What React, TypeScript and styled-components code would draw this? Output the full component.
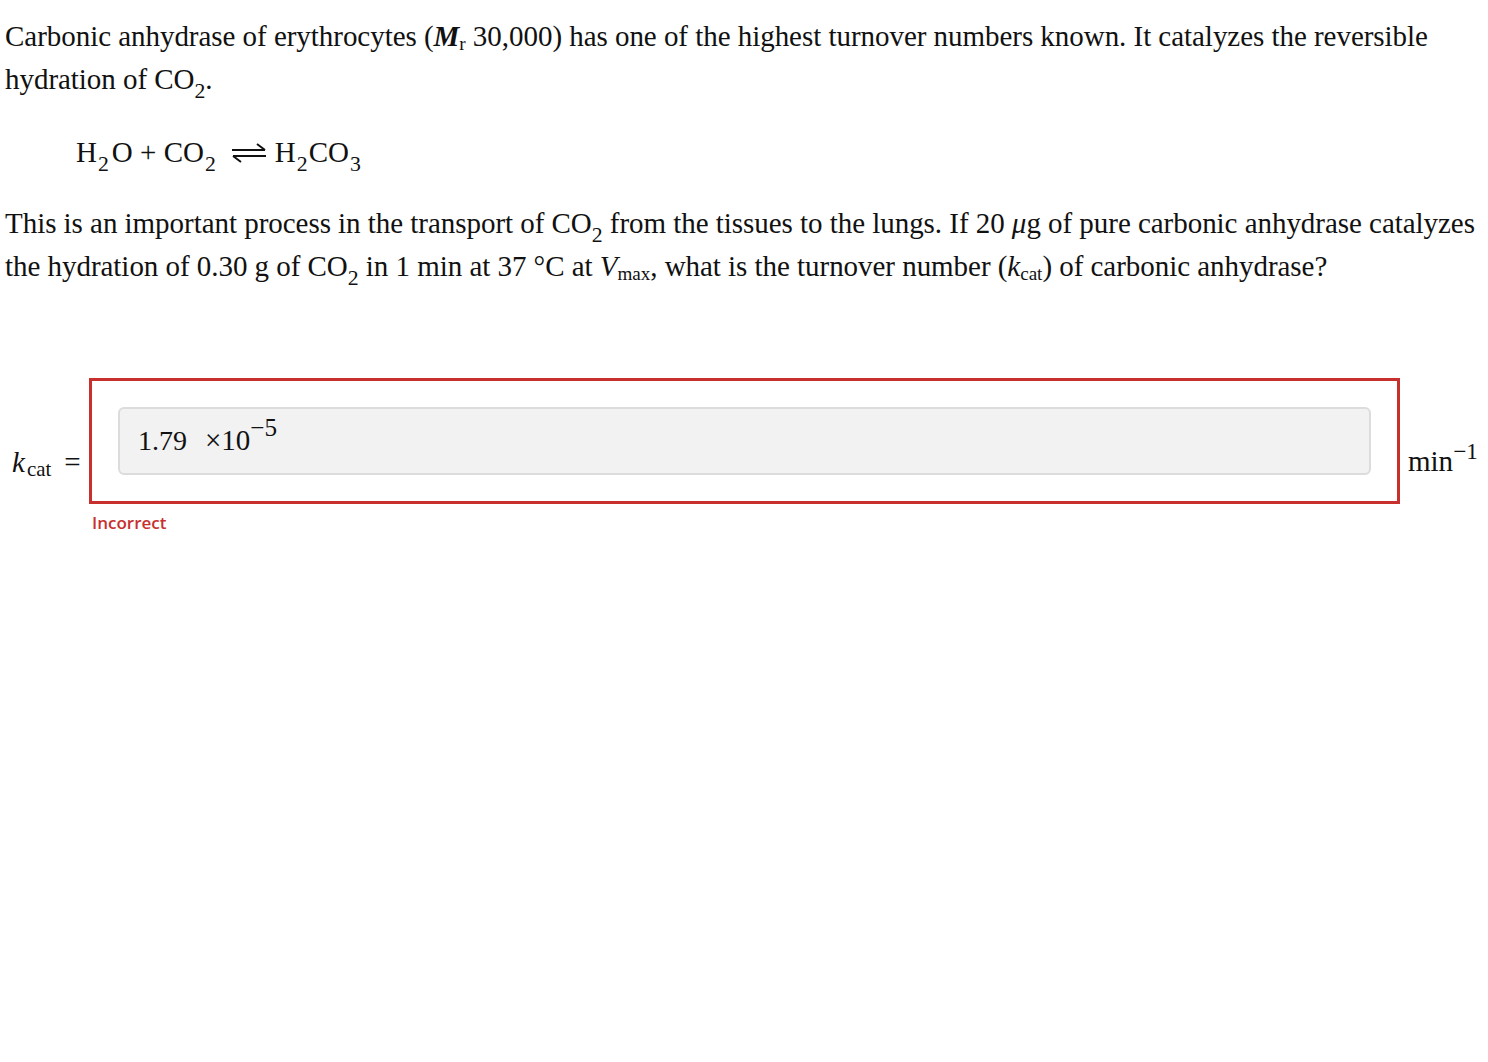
import React from "react";
import styled, { createGlobalStyle } from "styled-components";

const Global = createGlobalStyle`
  html, body { margin: 0; padding: 0; background: #fff; }
  body { font-family: "Liberation Serif", "Times New Roman", serif; color: #111; }
`;

const Page = styled.div`
  padding: 15px 5px 0 5px;
  display: flex;
  flex-direction: column;
`;

const Para = styled.p`
  margin: 0;
  font-size: 29px;
  line-height: 43px;
  letter-spacing: -0.04px;
`;

const Equation = styled.div`
  margin: 30px 0 28px 71px;
  font-size: 29px;
  line-height: 43px;
  display: flex;
  align-items: center;
`;

const Sub = styled.sub<{ $gap?: number }>`
  font-size: 0.75em;
  vertical-align: -0.4em;
  line-height: 0;
  margin-left: ${(p) => (p.$gap ? 1 : 0)}px;
  margin-right: ${(p) => p.$gap ?? 0}px;
`;

const SmallSub = styled.sub<{ $size?: number }>`
  font-size: ${(p) => p.$size ?? 0.66}em;
  vertical-align: -0.22em;
  line-height: 0;
`;

const Sup = styled.sup<{ $raise?: number; $size?: number }>`
  font-size: ${(p) => p.$size ?? 0.8}em;
  vertical-align: ${(p) => p.$raise ?? 0.5}em;
  line-height: 0;
`;

const I = styled.i`
  font-style: italic;
`;

const Arrow = styled.span`
  display: inline-flex;
  margin: 0 8px 0 14px;
`;

const AnswerRow = styled.div`
  margin-top: 90px;
  display: flex;
  align-items: flex-start;
`;

const Label = styled.div`
  width: 84px;
  padding-left: 7px;
  padding-top: 69px;
  font-size: 29px;
  line-height: 30px;
  display: flex;
  align-items: baseline;
  box-sizing: border-box;
`;

const LabelSub = styled.span`
  font-size: 0.72em;
  position: relative;
  top: 0.2em;
  margin-left: 2px;
`;

const Eq = styled.span`
  margin-left: 13px;
`;

const Field = styled.div`
  display: flex;
  flex-direction: column;
`;

const ErrorBox = styled.div`
  width: 1311px;
  height: 126px;
  box-sizing: border-box;
  border: 3px solid #c8302e;
  padding: 26px 26px 0 26px;
`;

const Input = styled.div`
  height: 68px;
  box-sizing: border-box;
  background: #f2f2f2;
  border: 2px solid #dcdcdc;
  border-radius: 6px;
  padding: 16px 0 0 18px;
  font-size: 28px;
  line-height: 30px;
`;

const Times = styled.span`
  margin-left: 11px;
  font-size: 29px;
`;

const Unit = styled.div`
  padding-top: 68px;
  padding-left: 8px;
  font-size: 29px;
  line-height: 30px;
`;

const Feedback = styled.div`
  margin: 8px 0 0 3px;
  font-family: "Open Sans", "Noto Sans", sans-serif;
  font-weight: 600;
  font-size: 17px;
  line-height: 22px;
  color: #c8302e;
`;

export default function App() {
  return (
    <>
      <Global />
      <Page>
        <Para>
          Carbonic anhydrase of erythrocytes (<I><b>M</b></I>
          <SmallSub>r</SmallSub> 30,000) has one of the highest turnover numbers known. It catalyzes the reversible
          hydration of CO<Sub>2</Sub>.
        </Para>
        <Equation>
          <span>
            H<Sub $gap={3}>2</Sub>O + CO<Sub $gap={1}>2</Sub>
          </span>
          <Arrow>
            <svg width="36" height="20" viewBox="0 0 36 20">
              <path d="M1 7 H34 M26 1 L34 7" stroke="#111" strokeWidth="2" fill="none" />
              <path d="M2 13 H35 M2 13 L10 19" stroke="#111" strokeWidth="2" fill="none" />
            </svg>
          </Arrow>
          <span>
            H<Sub $gap={1}>2</Sub>CO<Sub $gap={1}>3</Sub>
          </span>
        </Equation>
        <Para>
          This is an important process in the transport of CO<Sub>2</Sub> from the tissues to the lungs. If 20{" "}
          <I>μ</I>g of pure carbonic anhydrase catalyzes the hydration of 0.30 g of CO<Sub>2</Sub> in 1 min at 37 °C at{" "}
          <I>V</I>
          <SmallSub>max</SmallSub>, what is the turnover number (<I>k</I>
          <SmallSub>cat</SmallSub>) of carbonic anhydrase?
        </Para>
        <AnswerRow>
          <Label>
            <I>k</I>
            <LabelSub>cat</LabelSub>
            <Eq>=</Eq>
          </Label>
          <Field>
            <ErrorBox>
              <Input>
                1.79 <Times>×10</Times>
                <Sup $size={0.9} $raise={0.55}>−5</Sup>
              </Input>
            </ErrorBox>
            <Feedback>Incorrect</Feedback>
          </Field>
          <Unit>
            min<Sup>−1</Sup>
          </Unit>
        </AnswerRow>
      </Page>
    </>
  );
}
